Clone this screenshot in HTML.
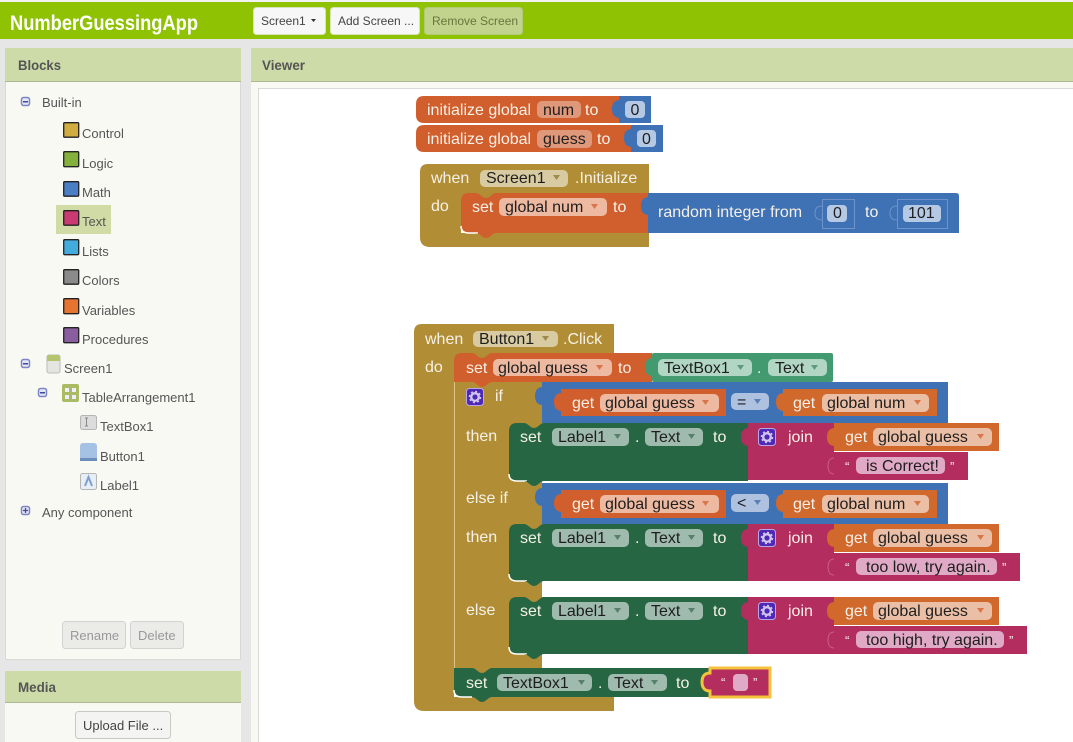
<!DOCTYPE html>
<html><head><meta charset="utf-8"><style>
html,body{margin:0;padding:0;background:#e6e6e6}
svg{display:block}
text{font-family:"Liberation Sans",Arial,sans-serif;white-space:pre}
.b text{font-size:16px;fill:#f6f1e8}
.b text.f{fill:#1e1e1e}
.s text{font-size:13px;fill:#555}
.q{font-size:13px!important}
</style></head><body>
<svg width="1073" height="742" viewBox="0 0 1073 742" xmlns="http://www.w3.org/2000/svg">
<defs>
<path id="t" d="M0 0C4 0 6 5 10 5C14 5 16 0 20 0Z"/>
<path id="p" d="M1-1C-3-1-7 1-7 8C-7 15-3 17 1 17Z"/>
<path id="a" d="M0 0H7L3.500 5Z"/>
<g id="gear"><rect x="0.500" y="0.500" width="17" height="17" rx="3" fill="#5028b8" stroke="#b9a8e8"/><circle cx="9" cy="9" r="3.800" fill="none" stroke="#cfc6ee" stroke-width="2.400"/><circle cx="9" cy="9" r="5.500" fill="none" stroke="#cfc6ee" stroke-width="1.500" stroke-dasharray="2 2.300"/></g>
</defs>
<rect width="1073" height="742" fill="#e6e6e6"/>
<rect width="1073" height="2" fill="#f2f2f2"/>
<rect y="2" width="1073" height="37" fill="#8fc202"/>
<text x="10" y="30" font-size="21" font-weight="bold" fill="#fff" textLength="188" lengthAdjust="spacingAndGlyphs">NumberGuessingApp</text>
<g font-size="12">
<rect x="253.500" y="7.500" width="72" height="27" rx="3" fill="#f7f7f7" stroke="#d8e2b8"/>
<text x="261" y="25" fill="#444" style="font-size:12px">Screen1</text><path d="M311 19h5l-2.500 3z" fill="#333"/>
<rect x="330.500" y="7.500" width="89" height="27" rx="3" fill="#f7f7f7" stroke="#d8e2b8"/>
<text x="338" y="25" fill="#444" style="font-size:12px">Add Screen ...</text>
<rect x="424.500" y="7.500" width="98" height="27" rx="3" fill="#c1d38c" stroke="#b3c97a"/>
<text x="432" y="25" fill="#68763f" style="font-size:12px">Remove Screen</text>
</g>

<!-- Left panel -->
<g class="s">
<rect x="5.500" y="48.500" width="235" height="611" fill="#f9f9f4" stroke="#d8d8d8"/>
<rect x="5" y="48" width="236" height="34" fill="#cddba9"/>
<rect x="5" y="81" width="236" height="1" fill="#aeb893"/>
<text x="18" y="70" font-weight="bold" textLength="43" lengthAdjust="spacingAndGlyphs" style="font-size:14px;fill:#555">Blocks</text>
<rect x="21.500" y="97.500" width="8" height="8" rx="2" fill="#e4e6f4" stroke="#7d86c4" stroke-width="1.500"/><rect x="23" y="101" width="5" height="1.500" fill="#3e4a9c"/>
<text x="42" y="107">Built-in</text>
<rect x="56" y="205" width="55" height="29" fill="#d0dba6"/>
<g stroke="#222" stroke-width="1.300">
<rect x="63.700" y="122.700" width="15" height="14.500" rx="1" fill="#d1ad3f"/>
<rect x="63.700" y="151.700" width="15" height="15" rx="1" fill="#84b13c"/>
<rect x="63.700" y="181.700" width="15" height="14.500" rx="1" fill="#4a7fc5"/>
<rect x="63.700" y="210.700" width="15" height="14.500" rx="1" fill="#c93a72"/>
<rect x="63.700" y="239.700" width="15" height="15" rx="1" fill="#44acdd"/>
<rect x="63.700" y="269.700" width="15" height="14.500" rx="1" fill="#8a8a8a"/>
<rect x="63.700" y="298.700" width="15" height="15" rx="1" fill="#e67330"/>
<rect x="63.700" y="327.700" width="15" height="15" rx="1" fill="#8a5e9e"/>
</g>
<text x="82" y="138">Control</text>
<text x="82" y="168">Logic</text>
<text x="82" y="197">Math</text>
<text x="82" y="226">Text</text>
<text x="82" y="256">Lists</text>
<text x="82" y="285">Colors</text>
<text x="82" y="315">Variables</text>
<text x="82" y="344">Procedures</text>
<rect x="21.500" y="359.500" width="8" height="8" rx="2" fill="#e4e6f4" stroke="#7d86c4" stroke-width="1.500"/><rect x="23" y="363" width="5" height="1.500" fill="#3e4a9c"/>
<rect x="47" y="355" width="13" height="18" rx="2" fill="#e4e4e0" stroke="#bbb"/><path d="M47 361v-4q0-2 2-2h9q2 0 2 2v4z" fill="#b4c56e"/>
<text x="64" y="373">Screen1</text>
<rect x="38.500" y="388.500" width="8" height="8" rx="2" fill="#e4e6f4" stroke="#7d86c4" stroke-width="1.500"/><rect x="40" y="392" width="5" height="1.500" fill="#3e4a9c"/>
<rect x="62" y="384" width="17" height="18" rx="2" fill="#a9bb63"/><rect x="65" y="388" width="4" height="4" fill="#eef"/><rect x="72" y="388" width="4" height="4" fill="#eef"/><rect x="65" y="395" width="4" height="4" fill="#eef"/><rect x="72" y="395" width="4" height="4" fill="#eef"/>
<text x="82" y="402">TableArrangement1</text>
<rect x="80.500" y="415.500" width="16" height="14" rx="2" fill="#dcdcdc" stroke="#b5b5b5"/><path d="M85 418h3M85 426h3M86.500 418v8" stroke="#888" fill="none"/>
<text x="100" y="431">TextBox1</text>
<rect x="80" y="443" width="17" height="18" rx="3" fill="#a5c1e4"/><rect x="80" y="458" width="17" height="3" fill="#6e8fbe"/>
<text x="100" y="461">Button1</text>
<rect x="80.500" y="473.500" width="16" height="16" rx="2" fill="#e8eef6" stroke="#b5b5b5"/><path d="M85 486l3.500-9 3.500 9" stroke="#7f9fd0" stroke-width="2" fill="none"/>
<text x="100" y="490">Label1</text>
<rect x="21.500" y="506.500" width="8" height="8" rx="2" fill="#e4e6f4" stroke="#7d86c4" stroke-width="1.500"/><path d="M23 510.500h5M25.500 508v5" stroke="#3e4a9c" stroke-width="1.300"/>
<text x="42" y="517">Any component</text>
<rect x="62.500" y="621.500" width="63" height="27" rx="3" fill="#ebebe8" stroke="#d2d2d2"/><text x="70" y="640" style="fill:#999">Rename</text>
<rect x="130.500" y="621.500" width="53" height="27" rx="3" fill="#ebebe8" stroke="#d2d2d2"/><text x="138" y="640" style="fill:#999">Delete</text>
<rect x="5" y="671" width="236" height="71" fill="#f9f9f4"/>
<rect x="5" y="671" width="236" height="32" fill="#cddba9"/>
<rect x="5" y="702" width="236" height="1" fill="#aeb893"/>
<text x="18" y="692" font-weight="bold" textLength="38" lengthAdjust="spacingAndGlyphs" style="font-size:14px;fill:#555">Media</text>
<rect x="75.500" y="711.500" width="95" height="27" rx="3" fill="#f4f4f2" stroke="#c8c8c8"/><text x="83" y="730" style="fill:#444">Upload File ...</text>
</g>

<!-- Viewer -->
<rect x="251" y="48" width="822" height="694" fill="#f9f9f4"/>
<rect x="251" y="48" width="822" height="34" fill="#cddba9"/>
<rect x="251" y="81" width="822" height="1" fill="#aeb893"/>
<text x="262" y="70" font-weight="bold" font-size="14" fill="#555" textLength="43" lengthAdjust="spacingAndGlyphs">Viewer</text>
<rect x="258.500" y="88.500" width="815" height="654" fill="#fff" stroke="#d9d9d9"/>

<g class="b">
<!-- init -->
<path d="M424 96H619V123H424Q416 123 416 115V104Q416 96 424 96Z" fill="#d05f2d"/>
<rect x="619" y="96" width="32" height="27" fill="#3f71b5"/><use href="#p" x="619" y="101" fill="#3f71b5"/>
<rect x="537" y="101" width="44" height="17" rx="5" fill="#e0987a"/>
<rect x="625" y="101" width="20" height="17" rx="4" fill="#b6c9e4"/>
<text x="427" y="115">initialize global</text><text class="f" x="543" y="115">num</text><text x="585" y="115">to</text><text class="f" x="630.500" y="115">0</text>
<path d="M424 125H631V152H424Q416 152 416 144V133Q416 125 424 125Z" fill="#d05f2d"/>
<rect x="631" y="125" width="32" height="27" fill="#3f71b5"/><use href="#p" x="631" y="130" fill="#3f71b5"/>
<rect x="537" y="130" width="55" height="18" rx="5" fill="#e0987a"/>
<rect x="637" y="130" width="19" height="17" rx="4" fill="#b6c9e4"/>
<text x="427" y="144">initialize global</text><text class="f" x="543" y="144">guess</text><text x="597" y="144">to</text><text class="f" x="642" y="144">0</text>

<!-- Screen1 -->
<path d="M420 172Q420 164 428 164H649V193H461V233H649V247H430Q420 247 420 237Z" fill="#b18e35"/>
<rect x="461" y="193" width="10" height="10" fill="#b18e35"/>
<path d="M461 201Q461 193 469 193H648V233H469Q461 233 461 225Z" fill="#d05f2d"/>
<path d="M461 226Q461 233 469 233H478" fill="none" stroke="#fff" stroke-width="1.500"/>
<use href="#t" x="476" y="233" fill="#d05f2d"/><use href="#t" x="476" y="193" fill="#b18e35"/>
<rect x="480" y="170" width="88" height="17" rx="5" fill="#d9cba1"/><use href="#a" x="553" y="175" fill="#9c8a4e"/>
<text x="431" y="183">when</text><text class="f" x="486" y="183">Screen1</text><text x="575" y="183">.Initialize</text><text x="431" y="211">do</text>
<rect x="499" y="198" width="108" height="18" rx="5" fill="#eeb9a1"/><use href="#a" x="591" y="204" fill="#d9754a"/>
<text x="472" y="212">set</text><text class="f" x="505" y="212">global num</text><text x="613" y="212">to</text>
<path d="M648 193H956Q959 193 959 196V233H648Z" fill="#3f71b5"/><use href="#p" x="648" y="198" fill="#3f71b5"/>
<rect x="822.500" y="199.500" width="32" height="29" fill="none" stroke="#6f93c8"/><rect x="897.500" y="199.500" width="50" height="29" fill="none" stroke="#6f93c8"/>
<path d="M822 206C818 206 815 208 815 213C815 218 818 220 822 220" fill="none" stroke="#6f93c8"/><path d="M897 206C893 206 890 208 890 213C890 218 893 220 897 220" fill="none" stroke="#6f93c8"/>
<rect x="827" y="205" width="20" height="17" rx="4" fill="#b6c9e4"/><rect x="903" y="205" width="38" height="17" rx="4" fill="#b6c9e4"/>
<text x="658" y="217">random integer from</text><text class="f" x="833" y="218">0</text><text x="865" y="217">to</text><text class="f" x="908" y="218">101</text>

<!-- Button1 -->
<path d="M414 332Q414 324 422 324H614V353H454V697H614V711H424Q414 711 414 701Z" fill="#b18e35"/>
<rect x="454" y="353" width="10" height="10" fill="#b18e35"/>
<rect x="473" y="331" width="85" height="16" rx="5" fill="#d9cba1"/><use href="#a" x="542" y="336" fill="#9c8a4e"/>
<text x="425" y="344">when</text><text class="f" x="479" y="344">Button1</text><text x="563" y="344">.Click</text><text x="425" y="372">do</text>
<rect x="454" y="382" width="88" height="286" fill="#b18e35"/>
<rect x="454" y="382" width="1" height="286" fill="#d9c588"/>

<!-- set global guess -->
<path d="M462 353H652V382H454V361Q454 353 462 353Z" fill="#d05f2d"/>
<use href="#t" x="472" y="353" fill="#b18e35"/><use href="#t" x="472" y="382" fill="#d05f2d"/>
<rect x="493" y="359" width="119" height="17" rx="5" fill="#eeb9a1"/><use href="#a" x="596" y="365" fill="#d9754a"/>
<text x="466" y="373">set</text><text class="f" x="498" y="373">global guess</text><text x="618" y="373">to</text>
<rect x="652" y="353" width="181" height="29" rx="2" fill="#439970"/><use href="#p" x="652" y="359" fill="#439970"/>
<rect x="658" y="359" width="94" height="17" rx="5" fill="#b1d6c4"/><use href="#a" x="737" y="365" fill="#5f9a80"/>
<rect x="768" y="359" width="59" height="17" rx="5" fill="#b1d6c4"/><use href="#a" x="811" y="365" fill="#5f9a80"/>
<text class="f" x="664" y="373">TextBox1</text><text x="757" y="373">.</text><text class="f" x="775" y="373">Text</text>

<!-- if row -->
<rect x="542" y="382" width="406" height="41" fill="#3f71b5"/><use href="#p" x="542" y="388" fill="#3f71b5"/>
<rect x="561" y="389" width="165" height="27" fill="#d05f2d"/><use href="#p" x="561" y="394" fill="#d05f2d"/>
<rect x="600" y="394" width="119" height="18" rx="5" fill="#eeb9a1"/><use href="#a" x="702" y="400" fill="#d9754a"/>
<rect x="731" y="393" width="38" height="17" rx="5" fill="#aec2e0"/><use href="#a" x="754" y="399" fill="#5a7fb5"/>
<rect x="783" y="389" width="154" height="27" fill="#d1682c"/><use href="#p" x="783" y="394" fill="#d1682c"/>
<rect x="822" y="394" width="107" height="18" rx="5" fill="#ebbfa6"/><use href="#a" x="914" y="400" fill="#d9754a"/>
<use href="#gear" x="466" y="388"/>
<text x="495" y="401">if</text><text x="572" y="408">get</text><text class="f" x="605" y="408">global guess</text><text class="f" x="737" y="407">=</text><text x="793" y="408">get</text><text class="f" x="827" y="408">global num</text>
<text x="466" y="441">then</text>

<!-- else if row -->
<rect x="542" y="483" width="406" height="41" fill="#3f71b5"/><use href="#p" x="542" y="489" fill="#3f71b5"/>
<rect x="561" y="490" width="165" height="28" fill="#d05f2d"/><use href="#p" x="561" y="495" fill="#d05f2d"/>
<rect x="600" y="495" width="119" height="18" rx="5" fill="#eeb9a1"/><use href="#a" x="702" y="501" fill="#d9754a"/>
<rect x="731" y="494" width="38" height="18" rx="5" fill="#aec2e0"/><use href="#a" x="754" y="500" fill="#5a7fb5"/>
<rect x="783" y="490" width="154" height="28" fill="#d1682c"/><use href="#p" x="783" y="495" fill="#d1682c"/>
<rect x="822" y="495" width="107" height="18" rx="5" fill="#ebbfa6"/><use href="#a" x="914" y="501" fill="#d9754a"/>
<text x="466" y="503">else if</text><text x="572" y="509">get</text><text class="f" x="605" y="509">global guess</text><text class="f" x="737" y="508">&lt;</text><text x="793" y="509">get</text><text class="f" x="827" y="509">global num</text>
<text x="466" y="542">then</text><text x="466" y="615">else</text>

<!-- then 1 -->
<g>
<path d="M517 423H748V481H517Q509 481 509 473V431Q509 423 517 423Z" fill="#266643"/>
<path d="M509 474Q509 481 517 481H527" fill="none" stroke="#fff" stroke-width="1.500"/>
<use href="#t" x="524" y="423" fill="#b18e35"/><use href="#t" x="524" y="481" fill="#266643"/>
<rect x="552" y="428" width="77" height="18" rx="5" fill="#9fbbad"/><use href="#a" x="614" y="434" fill="#56806b"/>
<rect x="645" y="428" width="58" height="18" rx="5" fill="#9fbbad"/><use href="#a" x="688" y="434" fill="#56806b"/>
<text x="520" y="442">set</text><text class="f" x="558" y="442">Label1</text><text x="635" y="442">.</text><text class="f" x="651" y="442">Text</text><text x="713" y="442">to</text>
<rect x="748" y="423" width="86" height="57" fill="#b32d5e"/><use href="#p" x="748" y="429" fill="#b32d5e"/>
<use href="#gear" x="758" y="428"/>
<text x="788" y="442">join</text>
<rect x="834" y="423" width="165" height="28" fill="#d1682c"/><use href="#p" x="834" y="429" fill="#d1682c"/>
<rect x="873" y="428" width="119" height="18" rx="5" fill="#ebbfa6"/><use href="#a" x="977" y="434" fill="#d9754a"/>
<text x="845" y="442">get</text><text class="f" x="878" y="442">global guess</text>
<rect x="834" y="452" width="134" height="28" fill="#b32d5e"/><path d="M834 458C831 458 828 460 828 466C828 472 831 474 834 474" fill="none" stroke="#c9608a"/>
<rect x="856" y="457" width="89" height="17" rx="5" fill="#e0a9c5"/>
<text class="q" x="845" y="471">“</text><text class="f" x="866" y="471">is Correct!</text><text class="q" x="950" y="471">”</text>
</g>

<!-- then 2 -->
<g>
<path d="M517 524H748V581H517Q509 581 509 573V532Q509 524 517 524Z" fill="#266643"/>
<path d="M509 574Q509 581 517 581H527" fill="none" stroke="#fff" stroke-width="1.500"/>
<use href="#t" x="524" y="524" fill="#b18e35"/><use href="#t" x="524" y="581" fill="#266643"/>
<rect x="552" y="529" width="77" height="18" rx="5" fill="#9fbbad"/><use href="#a" x="614" y="535" fill="#56806b"/>
<rect x="645" y="529" width="58" height="18" rx="5" fill="#9fbbad"/><use href="#a" x="688" y="535" fill="#56806b"/>
<text x="520" y="543">set</text><text class="f" x="558" y="543">Label1</text><text x="635" y="543">.</text><text class="f" x="651" y="543">Text</text><text x="713" y="543">to</text>
<rect x="748" y="524" width="86" height="57" fill="#b32d5e"/><use href="#p" x="748" y="530" fill="#b32d5e"/>
<use href="#gear" x="758" y="529"/>
<text x="788" y="543">join</text>
<rect x="834" y="524" width="165" height="28" fill="#d1682c"/><use href="#p" x="834" y="530" fill="#d1682c"/>
<rect x="873" y="529" width="119" height="18" rx="5" fill="#ebbfa6"/><use href="#a" x="977" y="535" fill="#d9754a"/>
<text x="845" y="543">get</text><text class="f" x="878" y="543">global guess</text>
<rect x="834" y="553" width="186" height="28" fill="#b32d5e"/><path d="M834 559C831 559 828 561 828 567C828 573 831 575 834 575" fill="none" stroke="#c9608a"/>
<rect x="856" y="558" width="141" height="17" rx="5" fill="#e0a9c5"/>
<text class="q" x="845" y="572">“</text><text class="f" x="866" y="572">too low, try again.</text><text class="q" x="1002" y="572">”</text>
</g>

<!-- then 3 -->
<g>
<path d="M517 597H748V654H517Q509 654 509 646V605Q509 597 517 597Z" fill="#266643"/>
<path d="M509 647Q509 654 517 654H527" fill="none" stroke="#fff" stroke-width="1.500"/>
<use href="#t" x="524" y="597" fill="#b18e35"/><use href="#t" x="524" y="654" fill="#266643"/>
<rect x="552" y="602" width="77" height="18" rx="5" fill="#9fbbad"/><use href="#a" x="614" y="608" fill="#56806b"/>
<rect x="645" y="602" width="58" height="18" rx="5" fill="#9fbbad"/><use href="#a" x="688" y="608" fill="#56806b"/>
<text x="520" y="616">set</text><text class="f" x="558" y="616">Label1</text><text x="635" y="616">.</text><text class="f" x="651" y="616">Text</text><text x="713" y="616">to</text>
<rect x="748" y="597" width="86" height="57" fill="#b32d5e"/><use href="#p" x="748" y="603" fill="#b32d5e"/>
<use href="#gear" x="758" y="602"/>
<text x="788" y="616">join</text>
<rect x="834" y="597" width="165" height="28" fill="#d1682c"/><use href="#p" x="834" y="603" fill="#d1682c"/>
<rect x="873" y="602" width="119" height="18" rx="5" fill="#ebbfa6"/><use href="#a" x="977" y="608" fill="#d9754a"/>
<text x="845" y="616">get</text><text class="f" x="878" y="616">global guess</text>
<rect x="834" y="626" width="193" height="28" fill="#b32d5e"/><path d="M834 632C831 632 828 634 828 640C828 646 831 648 834 648" fill="none" stroke="#c9608a"/>
<rect x="856" y="631" width="148" height="17" rx="5" fill="#e0a9c5"/>
<text class="q" x="845" y="645">“</text><text class="f" x="866" y="645">too high, try again.</text><text class="q" x="1009" y="645">”</text>
</g>

<!-- set TextBox1 -->
<path d="M454 668H710V697H462Q454 697 454 689Z" fill="#266643"/>
<path d="M454 690Q454 697 462 697H472" fill="none" stroke="#fff" stroke-width="1.500"/>
<use href="#t" x="472" y="668" fill="#b18e35"/><use href="#t" x="472" y="697" fill="#266643"/>
<rect x="497" y="674" width="95" height="17" rx="5" fill="#9fbbad"/><use href="#a" x="578" y="680" fill="#56806b"/>
<rect x="608" y="674" width="59" height="17" rx="5" fill="#9fbbad"/><use href="#a" x="651" y="680" fill="#56806b"/>
<text x="466" y="688">set</text><text class="f" x="503" y="688">TextBox1</text><text x="598" y="688">.</text><text class="f" x="614" y="688">Text</text><text x="676" y="688">to</text>
<path d="M710 668H770V697H710V691C706 691 702 689 702 682C702 675 706 673 710 673Z" fill="#b32d5e" stroke="#f5c33b" stroke-width="3"/>
<rect x="733" y="674" width="15" height="17" rx="4" fill="#e0a9c5"/>
<text class="q" x="721" y="687">“</text><text class="q" x="753" y="687">”</text>
</g>
</svg>
</body></html>
